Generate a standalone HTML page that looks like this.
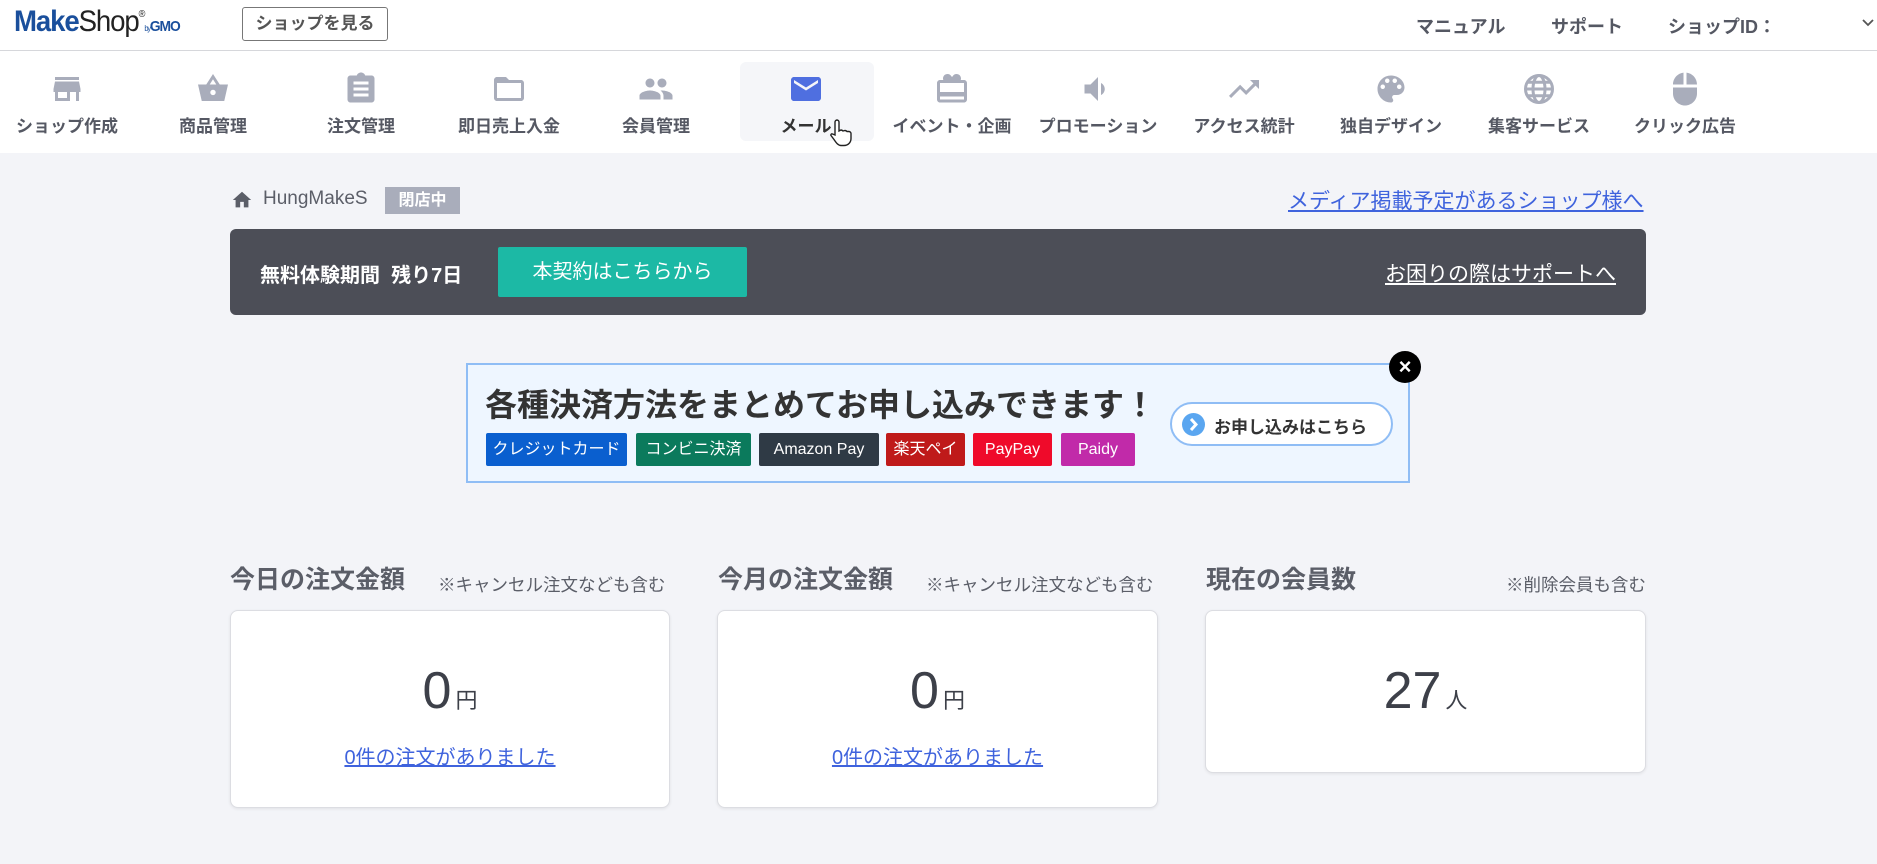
<!DOCTYPE html>
<html><head><meta charset="utf-8">
<style>
*{box-sizing:border-box;margin:0;padding:0}
body{width:1877px;height:864px;overflow:hidden;background:#f3f4f8;font-family:"Liberation Sans","Noto Sans CJK JP",sans-serif;color:#4a4d57;position:relative}
.abs{position:absolute}
#top{left:0;top:0;width:1877px;height:51px;background:#fff;border-bottom:1px solid #d6d7db}
#nav{left:0;top:51px;width:1877px;height:102px;background:#fff}
.ni{position:absolute;top:0;width:150px;margin-left:-75px;text-align:center}
.ni svg{position:absolute;left:57px;top:20px;width:36px;height:36px;fill:#a9adbb}
.ni span{position:absolute;left:0;width:150px;top:61px;font-size:17px;font-weight:bold;color:#555863;white-space:nowrap}
.chip{position:absolute;top:433px;height:33px;color:#fff;font-size:16px;line-height:33px;text-align:center;border-radius:2px}
.card{position:absolute;top:610px;background:#fff;border:1px solid #dcdde2;border-radius:8px;box-shadow:0 1px 3px rgba(0,0,0,.08)}
.h{position:absolute;top:560px;font-size:25px;font-weight:bold;color:#5b5e68}
.note{position:absolute;top:572px;font-size:17.5px;color:#5b5e68;white-space:nowrap}
.num{position:absolute;left:0;right:0;text-align:center;font-size:52px;color:#3d4049}
.num small{font-size:22px;margin-left:4px}
.lk{position:absolute;left:0;right:0;text-align:center;font-size:20px;color:#3f63dd;text-decoration:underline}
</style></head><body>
<div id="top" class="abs">
  <div class="abs" style="left:14px;top:5px;font-size:30px;letter-spacing:-1.2px;white-space:nowrap;transform:scaleX(0.92);transform-origin:0 0"><b style="color:#1a4f9c">Make</b><span style="color:#222">Shop</span><sup style="font-size:10px;color:#222;vertical-align:14px">®</sup><span style="font-size:8px;color:#1a4f9c">by</span><b style="font-size:15px;color:#1a4f9c">GMO</b></div>
  <div class="abs" style="left:242px;top:7px;width:146px;height:34px;border:1px solid #777;border-radius:3px;font-size:17px;font-weight:bold;line-height:32px;text-align:center;color:#555">ショップを見る</div>
  <div class="abs" style="left:1416px;top:13px;font-size:18px;font-weight:bold;color:#555863">マニュアル</div>
  <div class="abs" style="left:1551px;top:13px;font-size:18px;font-weight:bold;color:#555863">サポート</div>
  <div class="abs" style="left:1668px;top:13px;font-size:18px;font-weight:bold;color:#555863">ショップID：</div>
  <svg class="abs" style="left:1861px;top:18px" width="14" height="10" viewBox="0 0 14 10"><path d="M2 2l5 5 5-5" fill="none" stroke="#555" stroke-width="1.8"/></svg>
</div>
<div id="nav" class="abs">
  <div class="abs" style="left:740px;top:11px;width:134px;height:79px;background:#f5f6f9;border-radius:6px"></div>
  <div class="ni" style="left:67px"><svg viewBox="0 0 24 24"><path d="M20 4H4v2h16V4zm1 10v-2l-1-5H4l-1 5v2h1v6h10v-6h4v6h2v-6h1zm-9 4H6v-4h6v4z"/></svg><span>ショップ作成</span></div>
  <div class="ni" style="left:213px"><svg viewBox="0 0 24 24"><path d="M12 2l4.5 7H22l-2.5 11h-15L2 9h5.5zM9.8 9h4.4L12 5.5zM12 12.5a1.8 1.8 0 100 3.6 1.8 1.8 0 000-3.6z" fill-rule="evenodd"/></svg><span>商品管理</span></div>
  <div class="ni" style="left:361px"><svg viewBox="0 0 24 24"><path d="M19 3h-4.18C14.4 1.84 13.3 1 12 1s-2.4.84-2.82 2H5c-1.1 0-2 .9-2 2v14c0 1.1.9 2 2 2h14c1.1 0 2-.9 2-2V5c0-1.1-.9-2-2-2zm-2 14H7v-2h10v2zm0-4H7v-2h10v2zm0-4H7V7h10v2z"/></svg><span>注文管理</span></div>
  <div class="ni" style="left:509px"><svg viewBox="0 0 24 24"><path d="M20 6h-8l-2-2H4c-1.1 0-2 .9-2 2v12c0 1.1.9 2 2 2h16c1.1 0 2-.9 2-2V8c0-1.1-.9-2-2-2zm0 12H4V8h16v10z"/></svg><span>即日売上入金</span></div>
  <div class="ni" style="left:656px"><svg viewBox="0 0 24 24"><path d="M16 11c1.66 0 2.99-1.34 2.99-3S17.66 5 16 5c-1.66 0-3 1.34-3 3s1.34 3 3 3zm-8 0c1.66 0 2.99-1.34 2.99-3S9.66 5 8 5C6.34 5 5 6.34 5 8s1.34 3 3 3zm0 2c-2.33 0-7 1.17-7 3.5V19h14v-2.5c0-2.33-4.67-3.5-7-3.5zm8 0c-.29 0-.62.02-.97.05 1.16.84 1.97 1.97 1.97 3.45V19h6v-2.5c0-2.33-4.67-3.5-7-3.5z"/></svg><span>会員管理</span></div>
  <div class="ni" style="left:806px"><svg viewBox="0 0 24 24" style="fill:#4f6fe0"><path d="M20 4H4c-1.1 0-2 .9-2 2v12c0 1.1.9 2 2 2h16c1.1 0 2-.9 2-2V6c0-1.1-.9-2-2-2zm0 4l-8 5-8-5V6l8 5 8-5v2z"/></svg><span style="color:#333">メール</span></div>
  <svg class="abs" style="left:830px;top:66px" width="24" height="30" viewBox="0 0 24 30"><path d="M7 3c1 0 2 1 2 2v9l2-1c1 0 2 1 2 1l2-.5c1 0 2 1 2 1l2 0c1 0 2 1 2 2v5c0 4-3 7-7 7h-3c-3 0-5-3-7-6l-3-4c-.5-1 .5-2 1.5-1.5L5 18V5c0-1 1-2 2-2z" fill="#fff" stroke="#222" stroke-width="1.4"/></svg>
  <div class="ni" style="left:952px"><svg viewBox="0 0 24 24"><path d="M20 6h-2.2c.1-.3.2-.6.2-1 0-1.7-1.3-3-3-3-1 0-2 .5-2.5 1.4L12 4l-.5-.6C11 2.5 10 2 9 2 7.3 2 6 3.3 6 5c0 .4.1.7.2 1H4c-1.1 0-2 .9-2 2v11c0 1.1.9 2 2 2h16c1.1 0 2-.9 2-2V8c0-1.1-.9-2-2-2zm0 13H4v-2h16v2zm0-5H4V8h16v6z"/></svg><span>イベント・企画</span></div>
  <div class="ni" style="left:1098px"><svg viewBox="0 0 24 24"><path d="M3 9v6h4l5 5V4L7 9H3zm13.5 3c0-1.77-1.02-3.29-2.5-4.03v8.05c1.48-.73 2.5-2.25 2.5-4.02z"/></svg><span>プロモーション</span></div>
  <div class="ni" style="left:1244px"><svg viewBox="0 0 24 24"><path d="M16 6l2.29 2.29-4.88 4.88-4-4L2 16.59 3.41 18l6-6 4 4 6.3-6.29L22 12V6z"/></svg><span>アクセス統計</span></div>
  <div class="ni" style="left:1391px"><svg viewBox="0 0 24 24"><path d="M12 3c-4.97 0-9 4.03-9 9s4.03 9 9 9c.83 0 1.5-.67 1.5-1.5 0-.39-.15-.74-.39-1.01-.23-.26-.38-.61-.38-.99 0-.83.67-1.5 1.5-1.5H16c2.76 0 5-2.24 5-5 0-4.42-4.03-8-9-8zm-5.5 9c-.83 0-1.5-.67-1.5-1.5S5.67 9 6.5 9 8 9.67 8 10.5 7.33 12 6.5 12zm3-4C8.67 8 8 7.33 8 6.5S8.67 5 9.5 5s1.5.67 1.5 1.5S10.33 8 9.5 8zm5 0c-.83 0-1.5-.67-1.5-1.5S13.67 5 14.5 5s1.5.67 1.5 1.5S15.33 8 14.5 8zm3 4c-.83 0-1.5-.67-1.5-1.5S16.67 9 17.5 9s1.5.67 1.5 1.5-.67 1.5-1.5 1.5z"/></svg><span>独自デザイン</span></div>
  <div class="ni" style="left:1539px"><svg viewBox="0 0 24 24"><g fill="none" stroke="#a9adbb" stroke-width="2"><circle cx="12" cy="12" r="9"/><ellipse cx="12" cy="12" rx="4" ry="9"/><path d="M3 12h18M4.5 7.5h15M4.5 16.5h15"/></g></svg><span>集客サービス</span></div>
  <div class="ni" style="left:1685px"><svg viewBox="0 0 24 24"><path d="M13 1.07V9h7c0-4.08-3.05-7.44-7-7.93zM4 15c0 4.42 3.58 8 8 8s8-3.58 8-8v-4H4v4zm7-13.930C7.05 1.56 4 4.92 4 9h7V1.07z"/></svg><span>クリック広告</span></div>
</div>

<svg class="abs" style="left:231px;top:189px" width="22" height="22" viewBox="0 0 24 24"><path d="M10 20v-6h4v6h5v-8h3L12 3 2 12h3v8z" fill="#5b5e68"/></svg>
<div class="abs" style="left:263px;top:188px;font-size:19px;color:#5b5e68">HungMakeS</div>
<div class="abs" style="left:385px;top:187px;width:75px;height:27px;background:#a9adbb;color:#fff;font-size:16px;font-weight:bold;line-height:27px;text-align:center">閉店中</div>
<div class="abs" style="left:1288px;top:185px;font-size:21px;color:#3f63dd;text-decoration:underline">メディア掲載予定があるショップ様へ</div>

<div class="abs" style="left:230px;top:229px;width:1416px;height:86px;background:#4c4e57;border-radius:6px"></div>
<div class="abs" style="left:260px;top:259px;font-size:20px;font-weight:bold;color:#fff">無料体験期間&nbsp; 残り7日</div>
<div class="abs" style="left:498px;top:247px;width:249px;height:50px;background:#1cb9a5;border-radius:2px;color:#fff;font-size:20px;line-height:50px;text-align:center">本契約はこちらから</div>
<div class="abs" style="left:1385px;top:258px;font-size:21px;color:#fff;text-decoration:underline">お困りの際はサポートへ</div>

<div class="abs" style="left:466px;top:363px;width:944px;height:120px;background:#eef6ff;border:2px solid #8fbdf5"></div>
<div class="abs" style="left:1389px;top:351px;width:32px;height:32px;border-radius:50%;background:#000;color:#fff;font-size:22px;font-weight:bold;text-align:center;line-height:31px">×</div>
<div class="abs" style="left:485px;top:380px;font-size:32px;font-weight:bold;color:#333;white-space:nowrap">各種決済方法をまとめてお申し込みできます！</div>
<div class="chip" style="left:486px;width:141px;background:#0a5fcf">クレジットカード</div>
<div class="chip" style="left:636px;width:115px;background:#0b7a5c">コンビニ決済</div>
<div class="chip" style="left:759px;width:120px;background:#2f3a45">Amazon Pay</div>
<div class="chip" style="left:886px;width:79px;background:#bf1a1a">楽天ペイ</div>
<div class="chip" style="left:973px;width:79px;background:#ef0a2a">PayPay</div>
<div class="chip" style="left:1061px;width:74px;background:#c12aa9">Paidy</div>
<div class="abs" style="left:1170px;top:402px;width:223px;height:44px;background:#fff;border:2px solid #8fbdf5;border-radius:22px"></div>
<div class="abs" style="left:1182px;top:413px;width:23px;height:23px;border-radius:50%;background:#5aa6f0"></div>
<svg class="abs" style="left:1182px;top:413px" width="23" height="23" viewBox="0 0 23 23"><path d="M9 6l5 5.5-5 5.5" fill="none" stroke="#fff" stroke-width="3"/></svg>
<div class="abs" style="left:1214px;top:413px;font-size:17px;font-weight:bold;color:#333">お申し込みはこちら</div>

<div class="h" style="left:230px">今日の注文金額</div>
<div class="note" style="left:438px">※キャンセル注文なども含む</div>
<div class="h" style="left:718px">今月の注文金額</div>
<div class="note" style="left:926px">※キャンセル注文なども含む</div>
<div class="h" style="left:1206px">現在の会員数</div>
<div class="note" style="right:231px">※削除会員も含む</div>

<div class="card" style="left:230px;width:440px;height:198px"><div class="num" style="top:50px">0<small>円</small></div><div class="lk" style="top:130px">0件の注文がありました</div></div>
<div class="card" style="left:717px;width:441px;height:198px"><div class="num" style="top:50px">0<small>円</small></div><div class="lk" style="top:130px">0件の注文がありました</div></div>
<div class="card" style="left:1205px;width:441px;height:163px"><div class="num" style="top:50px">27<small>人</small></div></div>
</body></html>
